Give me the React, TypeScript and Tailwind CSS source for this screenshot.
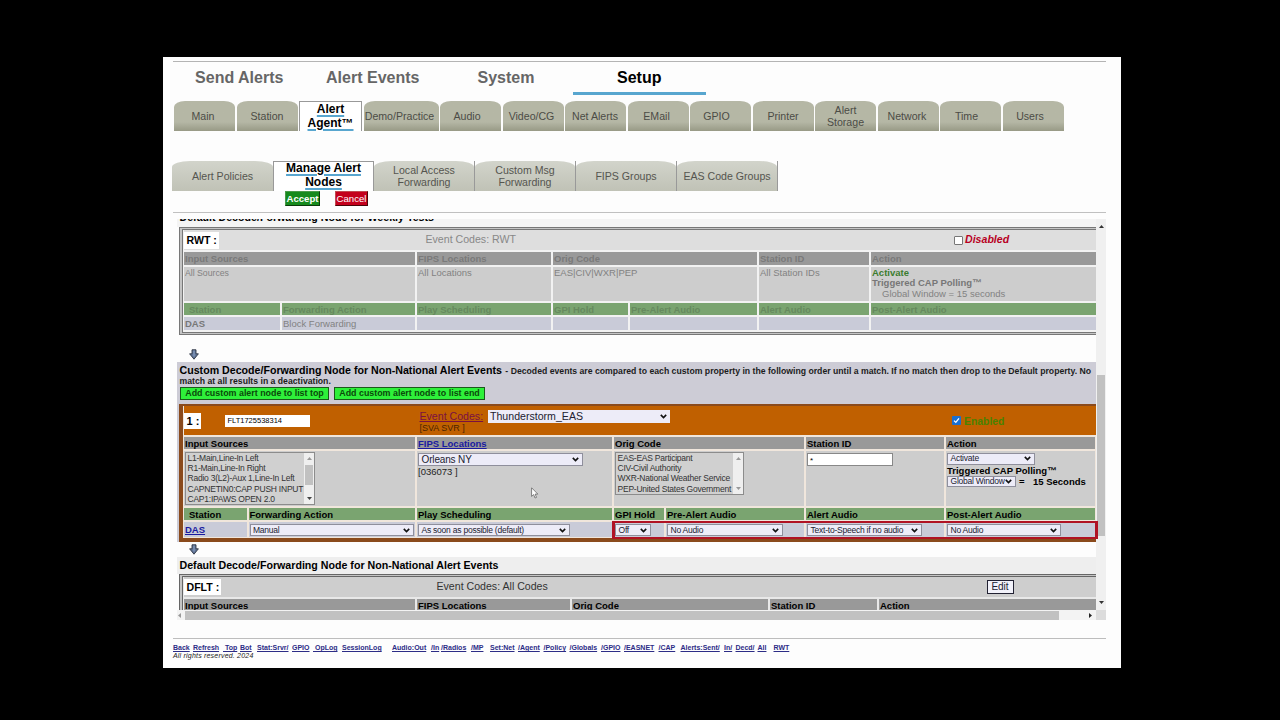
import type { ReactNode } from "react";

type Kids = { children?: ReactNode; c?: string };

const mainTabs: [string, string][] = [
  ["Main", "w-[61px] pr-[3px]"],
  ["Station", "w-[61px]"],
  ["Alert Agent™", "active"],
  ["Demo/Practice", "w-[75px] pr-[3px]"],
  ["Audio", "w-[61px] pr-[7px]"],
  ["Video/CG", "w-[61px] pr-[3px]"],
  ["Net Alerts", "w-[61px] pr-px"],
  ["EMail", "w-[61px] pr-[3px]"],
  ["GPIO", "w-[61px] pr-[8px]"],
  ["Printer", "w-[61px]"],
  ["Alert Storage", "w-[61px]"],
  ["Network", "w-[61px] pr-[2px]"],
  ["Time", "w-[61px] pr-[8px]"],
  ["Users", "w-[61px] pr-[6px]"],
];

const subTabs = [
  "Alert Policies",
  "Manage Alert Nodes",
  "Local Access Forwarding",
  "Custom Msg Forwarding",
  "FIPS Groups",
  "EAS Code Groups",
];

const links: [string, string][] = [
  ["Back", "w-[20px]"],
  ["Refresh", "w-[30px]"],
  ["\u00a0Top", "w-[17px]"],
  ["Bot", "w-[17px]"],
  ["Stat:Srvr/", "w-[35px]"],
  ["GPIO", "w-[21px]"],
  ["\u00a0OpLog", "w-[29px]"],
  ["SessionLog", "w-[50px]"],
  ["Audio:Out", "w-[39px]"],
  ["/In", "w-[10px]"],
  ["/Radios", "w-[30px]"],
  ["/MP", "w-[19px]"],
  ["Set:Net", "w-[28px]"],
  ["/Agent", "w-[25.5px]"],
  ["/Policy", "w-[26px]"],
  ["/Globals", "w-[31.5px]"],
  ["/GPIO", "w-[23px]"],
  ["/EASNET", "w-[34.5px]"],
  ["/CAP", "w-[22px]"],
  ["Alerts:Sent/", "w-[43.5px]"],
  ["In/", "w-[11.5px]"],
  ["Decd/", "w-[22px]"],
  ["All", "w-[16px]"],
  ["RWT", "w-[20px]"],
];

function Cell({ children, c = "" }: Kids) {
  return <div className={`shrink-0 overflow-hidden whitespace-nowrap pl-px ${c}`}>{children}</div>;
}

function Select({ children, c = "" }: Kids) {
  return (
    <div className={`flex shrink-0 items-center justify-between border border-[#8f8f9c] bg-[#edecf8] pl-[2.5px] pr-[3px] whitespace-nowrap text-[#222230] ${c}`}>
      <span>{children}</span>
      <svg className="h-[5px] w-[7px] shrink-0" viewBox="0 0 7 5">
        <path d="M0.8 0.9 3.5 3.6 6.2 0.9" fill="none" stroke="#111" strokeWidth="1.6" />
      </svg>
    </div>
  );
}

function DownArrow({ c = "" }: Kids) {
  return (
    <svg className={`h-[11px] w-[10px] ${c}`} viewBox="0 0 10 11">
      <path d="M3 0.8h4v4h2.4L5 10.2 0.6 4.8H3z" fill="#5f7396" stroke="#2d3442" strokeWidth="0.9" />
      <path d="M5 1.5v6" stroke="#8fa6c8" strokeWidth="1" />
    </svg>
  );
}

function Tri({ d, c = "" }: { d: "up" | "down" | "left" | "right"; c?: string }) {
  const paths = { up: "M0 4 2.5 1 5 4z", down: "M0 1 2.5 4 5 1z", left: "M4 0 1 2.5 4 5z", right: "M1 0 4 2.5 1 5z" };
  return (
    <svg className={`h-[5px] w-[5px] ${c}`} viewBox="0 0 5 5">
      <path d={paths[d]} fill="currentColor" />
    </svg>
  );
}

function ListBox({ items, c, thumb }: { items: string[]; c: string; thumb: boolean }) {
  return (
    <div className={`flex justify-between border border-[#8c8c8c] bg-[#d0d0d0] text-[8.5px] leading-[10.2px] tracking-[-0.23px] text-[#333] ${c}`}>
      <div className="pl-[1.5px]">
        {items.map((t) => (
          <div key={t} className="whitespace-nowrap">{t}</div>
        ))}
      </div>
      <div className="flex w-[10px] shrink-0 flex-col items-center bg-[#efefef] py-[3px]">
        <Tri d="up" c="text-[#999]" />
        {thumb && <div className="mt-[4px] h-[20px] w-[8px] bg-[#c1c1c1]" />}
        <Tri d="down" c={thumb ? "mt-auto text-[#444]" : "mt-auto text-[#999]"} />
      </div>
    </div>
  );
}

function TopArea() {
  return (
    <>
      <div className="ml-[10px] mt-[4px] h-px w-[933px] shrink-0 bg-[#b4b4b4]" />
      <nav className="ml-[9.5px] flex h-[33px] shrink-0 text-center text-[16px] leading-[32px] font-bold text-[#666]">
        <div className="w-[133.5px]">Send Alerts</div>
        <div className="w-[133.5px]">Alert Events</div>
        <div className="w-[133px]">System</div>
        <div className="w-[133.5px] border-b-[3px] border-[#58a6cf] text-black">Setup</div>
      </nav>
      <div className="ml-[11px] mt-[6px] flex h-[30px] shrink-0 gap-[1.5px] text-center text-[10.6px] leading-[12px] text-[#4c4c46]">
        {mainTabs.map(([t, c]) =>
          c === "active" ? (
            <div key={t} className="w-[63px] shrink-0 border border-b-0 border-[#999] bg-white text-[12px] leading-[14px] font-bold text-black underline decoration-[#58a6cf] decoration-[1.5px] underline-offset-[2px]">
              Alert<br />Agent™
            </div>
          ) : (
            <div key={t} className={`flex shrink-0 items-center justify-center rounded-t-[11px_6px] bg-linear-to-b from-[#b5b7a5] from-70% to-[#989a86] ${c}`}>
              {t}
            </div>
          ),
        )}
      </div>
      <div className="ml-[9px] mt-[30px] flex h-[30px] shrink-0 text-center text-[10.6px] leading-[12px] text-[#55554f]">
        {subTabs.map((t, i) =>
          i === 1 ? (
            <div key={t} className="w-[101px] border border-b-0 border-[#999] bg-white text-[12px] leading-[13.5px] font-bold text-black underline decoration-[#58a6cf] decoration-[1.5px] underline-offset-[2px]">
              Manage Alert<br />Nodes
            </div>
          ) : (
            <div key={t} className={`w-[101px] ${i > 1 ? "border-r border-[#999]" : ""}`}>
              <div className={`flex h-[30px] items-center justify-center rounded-t-[18px_6px] bg-linear-to-b from-[#d2d4cb] to-[#c0c2b6] ${i === 5 ? "" : "px-[14px]"}`}>
                {t}
              </div>
            </div>
          ),
        )}
      </div>
      <div className="ml-[122px] flex h-[15px] shrink-0 gap-[15px] text-center text-[9.6px] leading-[13px] text-white">
        <div className="w-[35px] border-[1.5px] border-t-[#4a9a4a] border-r-[#0a3a0a] border-b-[#0a3a0a] border-l-[#4a9a4a] bg-[#168a1c] font-bold">Accept</div>
        <div className="w-[33px] border-[1.5px] border-t-[#c04a50] border-r-[#4a0508] border-b-[#4a0508] border-l-[#c04a50] bg-[#c4001c]">Cancel</div>
      </div>
      <div className="ml-[10px] mt-[6px] h-px w-[933px] shrink-0 bg-[#c0c0c0]" />
    </>
  );
}

function RwtNode() {
  return (
    <div className="ml-[2px] h-[108px] w-[917px] shrink-0 border-t-[3px] border-b-[3px] border-l-[4px] border-double border-[#777] bg-[#c4c4c4] text-[9.5px] text-[#828282]">
      <div className="h-[102px] bg-[#f2f2f2] pl-px">
        <div className="flex h-[20px] items-center bg-[#dedede] text-[10.6px] text-[#888]">
          <div className="h-[17px] w-[35px] bg-white pl-[2.5px] text-[10.6px] leading-[17px] font-bold text-black">RWT :</div>
          <div className="ml-[206.5px] w-[528.5px]">Event Codes: RWT</div>
          <div className="h-[9px] w-[9px] rounded-[1px] border border-[#777] bg-white" />
          <div className="ml-[2px] font-bold italic text-[#b8001f]">Disabled</div>
        </div>
        <div className="mt-[2px] flex h-[13px] gap-[2px] leading-[13px] font-bold text-[#7a7a7a]">
          <Cell c="w-[231px] bg-[#999]">Input Sources</Cell>
          <Cell c="w-[134px] bg-[#999]">FIPS Locations</Cell>
          <Cell c="w-[204px] bg-[#999]">Orig Code</Cell>
          <Cell c="w-[110px] bg-[#999]">Station ID</Cell>
          <Cell c="w-[226px] bg-[#999]">Action</Cell>
        </div>
        <div className="mt-[1.5px] flex h-[34.5px] gap-[2px] leading-[10.8px]">
          <Cell c="w-[231px] bg-[#cdcdcd] pt-px text-[8.7px]">All Sources</Cell>
          <Cell c="w-[134px] bg-[#cdcdcd] pt-px">All Locations</Cell>
          <Cell c="w-[204px] bg-[#cdcdcd] pt-px">EAS|CIV|WXR|PEP</Cell>
          <Cell c="w-[110px] bg-[#cdcdcd] pt-px">All Station IDs</Cell>
          <Cell c="w-[226px] bg-[#cdcdcd] pt-px">
            <div className="font-bold text-[#3b7c2e]">Activate</div>
            <div className="font-bold text-[#777]">Triggered CAP Polling™</div>
            <div className="pl-[10px]">Global Window = 15 seconds</div>
          </Cell>
        </div>
        <div className="mt-[1.5px] flex h-[12.5px] gap-[2px] leading-[13px] font-bold text-[#668a5e]">
          <Cell c="w-[96px] bg-[#7aa470] indent-[4px]">Station</Cell>
          <Cell c="w-[133px] bg-[#7aa470]">Forwarding Action</Cell>
          <Cell c="w-[134px] bg-[#7aa470]">Play Scheduling</Cell>
          <Cell c="w-[75px] bg-[#7aa470]">GPI Hold</Cell>
          <Cell c="w-[127px] bg-[#7aa470]">Pre-Alert Audio</Cell>
          <Cell c="w-[110px] bg-[#7aa470]">Alert Audio</Cell>
          <Cell c="w-[226px] bg-[#7aa470]">Post-Alert Audio</Cell>
        </div>
        <div className="mt-[2px] flex h-[13px] gap-[2px] leading-[13px]">
          <Cell c="w-[96px] bg-[#c9cbd8] font-bold text-[#777]">DAS</Cell>
          <Cell c="w-[133px] bg-[#c9cbd8]">Block Forwarding</Cell>
          <Cell c="w-[134px] bg-[#c9cbd8]" />
          <Cell c="w-[75px] bg-[#c9cbd8]" />
          <Cell c="w-[127px] bg-[#c9cbd8]" />
          <Cell c="w-[110px] bg-[#c9cbd8]" />
          <Cell c="w-[226px] bg-[#c9cbd8]" />
        </div>
      </div>
    </div>
  );
}

function CustomNode() {
  return (
    <div className="mt-[4px] ml-[2px] h-[138px] w-[917px] shrink-0 border-t-[2px] border-b-[4px] border-l-[4px] border-[#8a4a1c] bg-[#f0e6dc] pl-px text-[9.5px] text-black">
      <div className="flex h-[29px] bg-[#c06000]">
        <div className="mt-[7px] h-[16px] w-[17px] bg-white pl-[2.5px] text-[11px] leading-[16px] font-bold">1 :</div>
        <div className="mt-[9px] ml-[24px] h-[11.5px] w-[85px] bg-white pl-[2.5px] text-[7.5px] leading-[12px]">FLT1725538314</div>
        <div className="ml-[109.5px] w-[68px] pt-[4px] text-[10.6px] leading-[13px] whitespace-nowrap">
          <div className="text-[#7a1040] underline">Event Codes:</div>
          <div className="text-[9px] leading-[11px] text-[#4a2400]">[SVA SVR ]</div>
        </div>
        <Select c="mt-[4px] h-[13px] w-[182.5px] border-0 text-[10.6px]">Thunderstorm_EAS</Select>
        <div className="mt-[10px] ml-[282px] flex h-[9px] w-[9px] items-center justify-center rounded-[1px] bg-[#1a6fd0]">
          <svg className="h-[7px] w-[7px]" viewBox="0 0 7 7"><path d="M1 3.6 2.8 5.4 6 1.4" fill="none" stroke="#fff" strokeWidth="1.3" /></svg>
        </div>
        <div className="mt-[9px] ml-[3px] text-[10.4px] leading-[13px] font-bold text-[#4a8200]">Enabled</div>
      </div>
      <div className="mt-[2px] flex h-[12px] gap-[2px] leading-[13px] font-bold">
        <Cell c="w-[231px] bg-[#999]">Input Sources</Cell>
        <Cell c="w-[195px] bg-[#999] text-[#1a1aa0] underline">FIPS Locations</Cell>
        <Cell c="w-[190px] bg-[#999]">Orig Code</Cell>
        <Cell c="w-[138px] bg-[#999]">Station ID</Cell>
        <Cell c="w-[149px] bg-[#999]">Action</Cell>
      </div>
      <div className="mt-[2px] flex h-[55px] gap-[2px]">
        <Cell c="w-[231px] bg-[#cdcdcd] pt-px">
          <ListBox thumb c="h-[53px] w-[130px]" items={["L1-Main,Line-In Left", "R1-Main,Line-In Right", "Radio 3(L2)-Aux 1,Line-In Left", "CAPNETIN0:CAP PUSH INPUT", "CAP1:IPAWS OPEN 2.0"]} />
        </Cell>
        <Cell c="w-[195px] bg-[#cdcdcd] pt-[2px]">
          <Select c="h-[13px] w-[165px] text-[10px] tracking-[-0.15px]">Orleans NY</Select>
          <div className="text-[9.5px] leading-[11px] text-[#222]">[036073 ]</div>
        </Cell>
        <Cell c="w-[190px] bg-[#cdcdcd] pt-px">
          <ListBox thumb={false} c="h-[43px] w-[129px]" items={["EAS-EAS Participant", "CIV-Civil Authority", "WXR-National Weather Service", "PEP-United States Government"]} />
        </Cell>
        <Cell c="w-[138px] bg-[#cdcdcd] pt-[2px]">
          <div className="h-[13px] w-[86px] border border-[#888] bg-white pl-[2px] text-[8px] leading-[13px]">*</div>
        </Cell>
        <Cell c="w-[149px] bg-[#cdcdcd] pt-[1.5px] font-bold">
          <Select c="h-[12px] w-[88px] text-[8.5px] tracking-[-0.23px] font-normal">Activate</Select>
          <div className="leading-[11px]">Triggered CAP Polling™</div>
          <div className="flex leading-[11px]">
            <Select c="h-[11.5px] w-[69px] text-[8.5px] tracking-[-0.23px] font-normal">Global Window</Select>
            <div className="ml-[3px] w-[14px]">=</div>
            <div>15 Seconds</div>
          </div>
        </Cell>
      </div>
      <div className="mt-[2px] flex h-[12px] gap-[2px] leading-[13px] font-bold">
        <Cell c="w-[62.5px] bg-[#7aa470] indent-[4px]">Station</Cell>
        <Cell c="w-[166.5px] bg-[#7aa470]">Forwarding Action</Cell>
        <Cell c="w-[195px] bg-[#7aa470]">Play Scheduling</Cell>
        <Cell c="w-[50px] bg-[#7aa470]">GPI Hold</Cell>
        <Cell c="w-[138px] bg-[#7aa470]">Pre-Alert Audio</Cell>
        <Cell c="w-[138px] bg-[#7aa470]">Alert Audio</Cell>
        <Cell c="w-[149px] bg-[#7aa470]">Post-Alert Audio</Cell>
      </div>
      <div className="mt-[2px] flex h-[15px] gap-[2px] text-[8.5px] tracking-[-0.23px]">
        <Cell c="w-[62.5px] bg-[#c9cbd8] text-[9.5px] leading-[15px] tracking-normal font-bold text-[#1a1aa0] underline">DAS</Cell>
        <Cell c="w-[166.5px] bg-[#c9cbd8] pt-[2px]"><Select c="h-[12px] w-[164px]">Manual</Select></Cell>
        <Cell c="w-[195px] bg-[#c9cbd8] pt-[2px]"><Select c="h-[12px] w-[152px]">As soon as possible (default)</Select></Cell>
        <Cell c="w-[50px] bg-[#c9cbd8] pt-[2px]"><Select c="h-[12px] w-[36px]">Off</Select></Cell>
        <Cell c="w-[138px] bg-[#c9cbd8] pt-[2px]"><Select c="h-[12px] w-[116px]">No Audio</Select></Cell>
        <Cell c="w-[138px] bg-[#c9cbd8] pt-[2px]"><Select c="h-[12px] w-[115px]">Text-to-Speech if no audio</Select></Cell>
        <Cell c="w-[149px] bg-[#c9cbd8] pt-[2px]"><Select c="h-[12px] w-[114px]">No Audio</Select></Cell>
      </div>
    </div>
  );
}

export default function App() {
  return (
    <div className="flex h-[720px] w-[1280px] overflow-hidden bg-black pt-[57px] pl-[163px] font-['Liberation_Sans',Arial,sans-serif]">
      <div className="flex h-[611px] w-[958px] flex-col bg-[#fdfdfd]">
        <TopArea />
        <div className="relative ml-[14px] mt-[6px] flex h-[391px] w-[929px] shrink-0">
          <div className="flex h-[391px] w-[919px] shrink-0 flex-col overflow-hidden">
            <div className="flex h-[8px] shrink-0 items-end overflow-hidden bg-[#f4f4f4] pb-[3px] pl-[2.5px] text-[10.65px] leading-[13px] font-bold whitespace-nowrap text-black">
              Default Decode/Forwarding Node for Weekly Tests
            </div>
            <RwtNode />
            <DownArrow c="mt-[14px] ml-[12px] shrink-0" />
            <div className="mt-[2px] h-[180px] w-[919px] shrink-0 bg-[#cdccd6]">
              <div className="h-[25px] pt-[2px] pl-[2.5px] text-[8.68px] leading-[10px] font-bold text-[#1c1c1c]">
                <div className="-mb-px leading-[12px] whitespace-nowrap">
                  <span className="mr-px text-[10.65px] text-black">Custom Decode/Forwarding Node for Non-National Alert Events</span>
                  {" "}- Decoded events are compared to each custom property in the following order until a match. If no match then drop to the Default property. No
                </div>
                match at all results in a deactivation.
              </div>
              <div className="flex h-[13px] gap-[5px] pl-[3px] text-center text-[8.9px] leading-[11px] font-bold text-[#0a4a0a]">
                <div className="w-[149px] border-[1.5px] border-[#1a5a1a] bg-[#2ef03a]">Add custom alert node to list top</div>
                <div className="w-[151px] border-[1.5px] border-[#1a5a1a] bg-[#2ef03a]">Add custom alert node to list end</div>
              </div>
              <CustomNode />
            </div>
            <DownArrow c="mt-[2px] ml-[12px] shrink-0" />
            <div className="mt-[2px] h-[17px] shrink-0 bg-[#eee] pl-[2.5px] text-[10.65px] leading-[17px] font-bold text-black">
              Default Decode/Forwarding Node for Non-National Alert Events
            </div>
            <div className="ml-[2px] h-[36px] w-[917px] shrink-0 overflow-hidden border-t-[3px] border-l-[4px] border-double border-[#666] bg-[#c4c4c4]">
              <div className="h-[34px] bg-[#e8e8e8] pl-px">
                <div className="flex h-[20px] items-center bg-[#cecece] text-[10.6px] text-[#333]">
                  <div className="h-[16px] w-[37px] bg-white pl-[2.5px] text-[10.6px] leading-[16px] font-bold text-black">DFLT :</div>
                  <div className="ml-[215.5px] w-[550px]">Event Codes: All Codes</div>
                  <div className="h-[14px] w-[27px] border-[1.5px] border-[#223] bg-[#f2f2fa] text-center text-[10px] leading-[12px] text-[#223]">Edit</div>
                </div>
                <div className="mt-[2px] flex h-[12px] gap-[2px] text-[9.5px] leading-[13px] font-bold text-black">
                  <Cell c="w-[231px] bg-[#999]">Input Sources</Cell>
                  <Cell c="w-[153px] bg-[#999]">FIPS Locations</Cell>
                  <Cell c="w-[196px] bg-[#999]">Orig Code</Cell>
                  <Cell c="w-[107px] bg-[#999]">Station ID</Cell>
                  <Cell c="w-[220px] bg-[#999]">Action</Cell>
                </div>
              </div>
            </div>
          </div>
          <div className="flex w-[10px] shrink-0 flex-col items-center bg-[#f0f0f0] pt-[5px] pb-[5px] text-[#333]">
            <Tri d="up" />
            <div className="mt-[146px] h-[161px] w-[8px] bg-[#c1c1c1]" />
            <Tri d="down" c="mt-auto" />
          </div>
          <div className="absolute top-[302px] left-[435px] h-[18px] w-[486px] border-x-[3px] border-y-[2px] border-[#b01224]" />
          <svg className="absolute top-[268px] left-[354px] h-[12px] w-[8px]" viewBox="0 0 8 12">
            <path d="M0.6 0.8v8.6l2-1.8 1.5 3.4 1.4-.6L4.1 7.1h2.7z" fill="#fff" stroke="#555" strokeWidth="0.7" />
          </svg>
        </div>
        <div className="ml-[14px] flex h-[10px] w-[929px] shrink-0 items-center bg-[#f3f3f3]">
          <Tri d="left" c="text-[#999]" />
          <div className="ml-[2.5px] h-[9px] w-[874px] bg-[#c1c1c1]" />
          <Tri d="right" c="ml-[29px] text-[#222]" />
          <div className="ml-auto h-[10px] w-[10px] bg-[#dcdcdc]" />
        </div>
        <div className="ml-[10px] mt-[18px] h-px w-[933px] shrink-0 bg-[#bdbdbd]" />
        <div className="ml-[10px] mt-[4px] flex h-[9px] shrink-0 text-[7px] leading-[9px] font-bold text-[#2c2c86]">
          {links.map(([t, c]) => (
            <div key={t} className={`shrink-0 whitespace-nowrap underline ${c}`}>{t}</div>
          ))}
        </div>
        <div className="ml-[10px] text-[7px] leading-[8px] tracking-[0.2px] text-[#222] italic">All rights reserved. 2024</div>
      </div>
    </div>
  );
}
